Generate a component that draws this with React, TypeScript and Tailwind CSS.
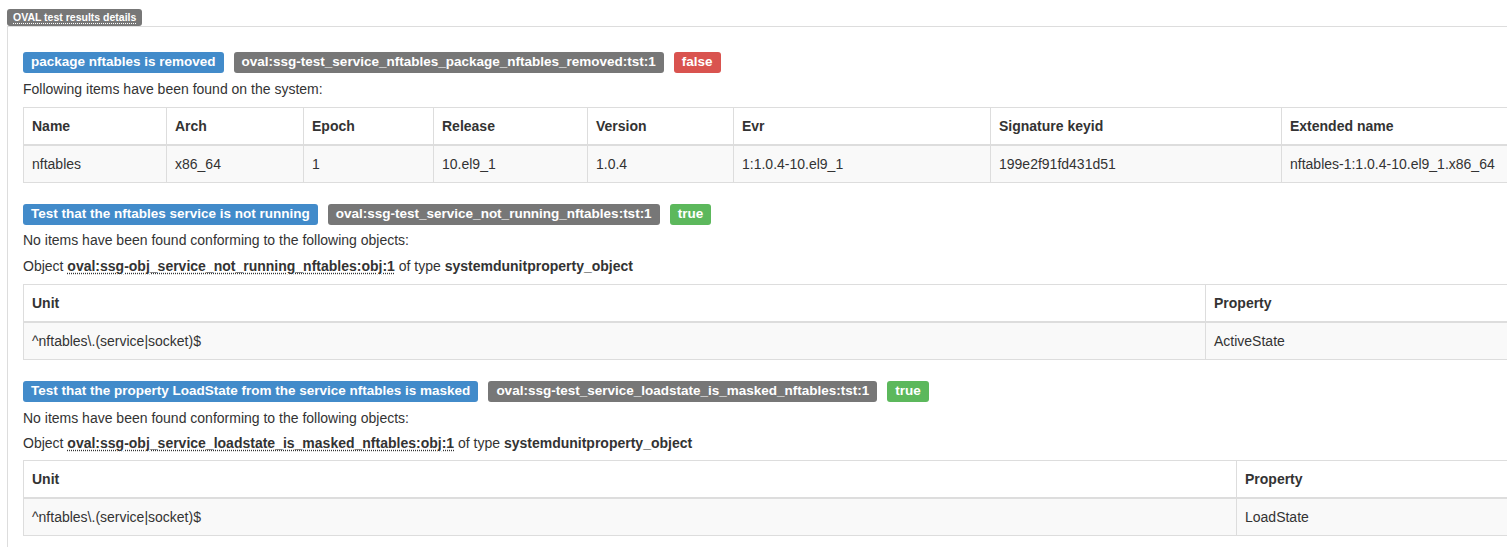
import React from 'react';

type Tone = 'primary' | 'default' | 'danger' | 'success';

const toneClass: Record<Tone, string> = {
  primary: 'bg-[#428bca]',
  default: 'bg-[#777777]',
  danger: 'bg-[#d9534f]',
  success: 'bg-[#5cb85c]',
};

const Label = ({ tone, children }: { tone: Tone; children: React.ReactNode }) => (
  <span
    className={`inline-block ${toneClass[tone]} text-white font-bold text-[13.5px] leading-[14px] pt-[3px] pb-[4px] px-[8px] rounded-[3px] whitespace-nowrap`}
  >
    {children}
  </span>
);

const TestHeader = ({ title, id, result }: { title: string; id: string; result: 'true' | 'false' }) => (
  <div className="flex items-center gap-[10px]">
    <Label tone="primary">{title}</Label>
    <Label tone="default">{id}</Label>
    <Label tone={result === 'true' ? 'success' : 'danger'}>{result}</Label>
  </div>
);

const DataTable = ({ cols, head, rows }: { cols: string[]; head: string[]; rows: string[][] }) => (
  <table className="table-fixed border-collapse w-[1510px] border border-[#dddddd]">
    <colgroup>
      {cols.map((c, i) => (
        <col key={i} className={c} />
      ))}
    </colgroup>
    <thead>
      <tr>
        {head.map((h) => (
          <th key={h} className="text-left font-bold p-[8px] border border-[#dddddd] border-b-2 leading-[20px]">
            {h}
          </th>
        ))}
      </tr>
    </thead>
    <tbody>
      {rows.map((r, i) => (
        <tr key={i} className="bg-[#f9f9f9]">
          {r.map((c, j) => (
            <td key={j} className="p-[8px] border border-[#dddddd] leading-[20px] whitespace-nowrap">
              {c}
            </td>
          ))}
        </tr>
      ))}
    </tbody>
  </table>
);

const ObjectLine = ({ id }: { id: string }) => (
  <p>
    Object{' '}
    <abbr className="font-bold underline decoration-dotted underline-offset-2">{id}</abbr> of type{' '}
    <strong>systemdunitproperty_object</strong>
  </p>
);

export default function App() {
  return (
    <div className="w-[1507px] h-[547px] overflow-hidden bg-white text-[14px] leading-[20px] text-[#333333] font-['Liberation_Sans',Arial,sans-serif]">
      <div className="pl-[7px] pt-[9px]">
        {/* legend */}
        <div className="w-fit bg-[#777777] text-white font-bold text-[10.5px] leading-[11px] pt-[3px] pb-[3px] px-[6px] rounded-[3px]">
          <abbr className="underline decoration-dotted underline-offset-2">OVAL test results details</abbr>
        </div>
        <div className="w-[1560px] border-l border-t border-[#dddddd] pl-[15px] pt-[25px] pb-[20px]">
          <TestHeader
            title="package nftables is removed"
            id="oval:ssg-test_service_nftables_package_nftables_removed:tst:1"
            result="false"
          />
          <p className="mt-[6px]">Following items have been found on the system:</p>
          <div className="mt-[8px]">
            <DataTable
              cols={['w-[143px]', 'w-[137px]', 'w-[130px]', 'w-[154px]', 'w-[146px]', 'w-[257px]', 'w-[291px]', '']}
              head={['Name', 'Arch', 'Epoch', 'Release', 'Version', 'Evr', 'Signature keyid', 'Extended name']}
              rows={[
                [
                  'nftables',
                  'x86_64',
                  '1',
                  '10.el9_1',
                  '1.0.4',
                  '1:1.0.4-10.el9_1',
                  '199e2f91fd431d51',
                  'nftables-1:1.0.4-10.el9_1.x86_64',
                ],
              ]}
            />
          </div>

          <div className="mt-[21px]">
            <TestHeader
              title="Test that the nftables service is not running"
              id="oval:ssg-test_service_not_running_nftables:tst:1"
              result="true"
            />
          </div>
          <p className="mt-[5px]">No items have been found conforming to the following objects:</p>
          <div className="mt-[6px]">
            <ObjectLine id="oval:ssg-obj_service_not_running_nftables:obj:1" />
          </div>
          <div className="mt-[8px]">
            <DataTable
              cols={['w-[1182px]', '']}
              head={['Unit', 'Property']}
              rows={[['^nftables\\.(service|socket)$', 'ActiveState']]}
            />
          </div>

          <div className="mt-[21px]">
            <TestHeader
              title="Test that the property LoadState from the service nftables is masked"
              id="oval:ssg-test_service_loadstate_is_masked_nftables:tst:1"
              result="true"
            />
          </div>
          <p className="mt-[6px]">No items have been found conforming to the following objects:</p>
          <div className="mt-[5px]">
            <ObjectLine id="oval:ssg-obj_service_loadstate_is_masked_nftables:obj:1" />
          </div>
          <div className="mt-[7px]">
            <DataTable
              cols={['w-[1213px]', '']}
              head={['Unit', 'Property']}
              rows={[['^nftables\\.(service|socket)$', 'LoadState']]}
            />
          </div>
        </div>
      </div>
    </div>
  );
}
